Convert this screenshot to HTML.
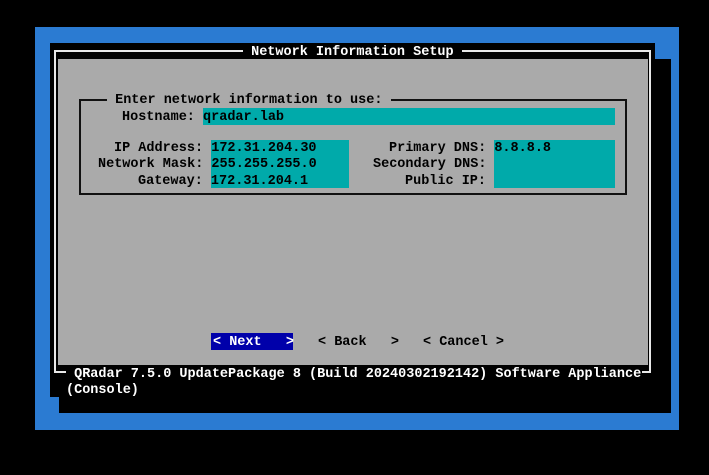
<!DOCTYPE html>
<html><head><style>
body{margin:0;width:709px;height:475px;background:#000;position:relative;overflow:hidden;font-family:"Liberation Mono",monospace;font-size:13.5px;font-weight:bold;}
div{position:absolute;}
.t{white-space:pre;line-height:16px;height:16px;color:#000;padding-top:6px;}
.w{color:#fff;}
.c{background:#00aaaa;}
</style></head><body>
<div style="left:35px;top:27px;width:644px;height:403px;background:#2b7bd2"></div>
<div style="left:59px;top:397px;width:612px;height:16px;background:#000"></div>
<div style="left:655px;top:59px;width:16px;height:354px;background:#000"></div>
<div style="left:50px;top:43px;width:605px;height:354px;background:#000"></div>
<div style="left:54px;top:50px;width:597px;height:323px;border:2px solid #e8e8e8;box-sizing:border-box"></div>
<div style="left:58px;top:59px;width:590px;height:306px;background:#aaaaaa"></div>
<div style="left:243px;top:45px;width:219px;height:10px;background:#000"></div>
<div class="t w" style="left:243px;top:39px;"> Network Information Setup </div>
<div style="left:79px;top:99px;width:548px;height:96px;border:2px solid #111;box-sizing:border-box"></div>
<div style="left:107px;top:95px;width:284px;height:8px;background:#aaaaaa"></div>
<div class="t" style="left:107px;top:87px"> Enter network information to use: </div>
<div class="c" style="left:203px;top:108px;width:412px;height:17px"></div>
<div class="t" style="left:122px;top:104px">Hostname: qradar.lab</div>
<div class="c" style="left:211px;top:140px;width:138px;height:48px"></div>
<div class="c" style="left:494px;top:140px;width:121px;height:48px"></div>
<div class="t" style="left:114px;top:135px">IP Address: 172.31.204.30</div>
<div class="t" style="left:98px;top:151px">Network Mask: 255.255.255.0</div>
<div class="t" style="left:138px;top:168px">Gateway: 172.31.204.1</div>
<div class="t" style="left:389px;top:135px">Primary DNS: 8.8.8.8</div>
<div class="t" style="left:373px;top:151px">Secondary DNS:</div>
<div class="t" style="left:405px;top:168px">Public IP:</div>
<div style="left:211px;top:333px;width:82px;height:17px;background:#0000aa"></div>
<div class="t w" style="left:213px;top:329px">&lt; Next   &gt;</div>
<div class="t" style="left:318px;top:329px">&lt; Back   &gt;</div>
<div class="t" style="left:423px;top:329px">&lt; Cancel &gt;</div>
<div style="left:66px;top:366px;width:576px;height:14px;background:#000"></div>
<div class="t w" style="left:66px;top:361px"> QRadar 7.5.0 UpdatePackage 8 (Build 20240302192142) Software Appliance</div>
<div class="t w" style="left:66px;top:377px">(Console)</div>
</body></html>
